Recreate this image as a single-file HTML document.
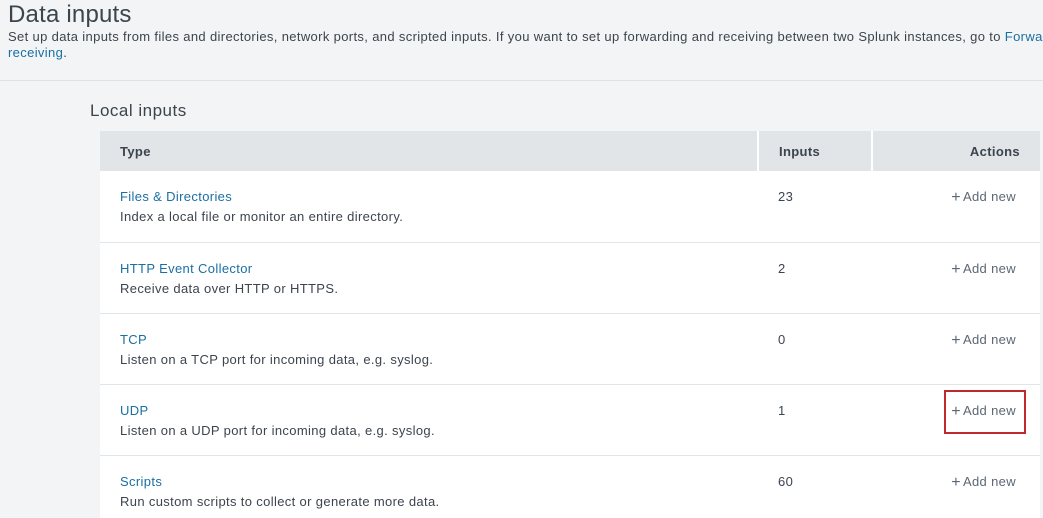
<!DOCTYPE html>
<html><head><style>
html,body{margin:0;width:1043px;height:518px;overflow:hidden}
body{background:#f2f4f5;font-family:"Liberation Sans",sans-serif;color:#3c444d;position:relative;letter-spacing:0.35px}
h1{position:absolute;left:8px;top:0;margin:0;font-size:24px;font-weight:normal;line-height:30px;color:#3c444d;letter-spacing:0.2px}
.desc{position:absolute;left:8px;top:29px;font-size:13px;line-height:16px;white-space:nowrap;width:1035px;overflow:hidden}
a{color:#1a6fa3;text-decoration:none}
.hr{position:absolute;left:0;top:80px;width:1043px;height:1px;background:#dde2e6}
h2{position:absolute;left:90px;top:101px;margin:0;font-size:17px;font-weight:normal;line-height:20px;letter-spacing:0.5px}
table{position:absolute;left:100px;top:131px;width:940px;border-collapse:collapse;font-size:13px;background:#fff;table-layout:fixed}
th{background:#e1e5e8;height:40px;text-align:left;font-weight:bold;padding:0 20px;border-right:2px solid #fff}
th:last-child{border-right:none;text-align:right}
td{vertical-align:top;height:71px;padding:0 20px;border-bottom:1px solid #e1e5e8;box-sizing:border-box}
td .t{margin-top:16px;line-height:20px}
td.a{text-align:right;color:#5c6773;padding-right:24px;white-space:nowrap}
.p{font-size:16px;margin-right:2px;vertical-align:-1px}
.box{position:absolute;left:944px;top:390px;width:78px;height:40px;border:2px solid #c0282f}
</style></head><body>
<h1>Data inputs</h1>
<div class="desc">Set up data inputs from files and directories, network ports, and scripted inputs. If you want to set up forwarding and receiving between two Splunk instances, go to <a>Forwarding and</a><br><a>receiving</a>.</div>
<div class="hr"></div>
<h2>Local inputs</h2>
<table>
<colgroup><col style="width:658px"><col style="width:114px"><col></colgroup>
<tr><th>Type</th><th>Inputs</th><th>Actions</th></tr>
<tr><td><div class="t"><a>Files &amp; Directories</a><br>Index a local file or monitor an entire directory.</div></td><td><div class="t">23</div></td><td class="a"><div class="t"><span class="p">+</span>Add new</div></td></tr>
<tr><td><div class="t"><a>HTTP Event Collector</a><br>Receive data over HTTP or HTTPS.</div></td><td><div class="t">2</div></td><td class="a"><div class="t"><span class="p">+</span>Add new</div></td></tr>
<tr><td><div class="t"><a>TCP</a><br>Listen on a TCP port for incoming data, e.g. syslog.</div></td><td><div class="t">0</div></td><td class="a"><div class="t"><span class="p">+</span>Add new</div></td></tr>
<tr><td><div class="t"><a>UDP</a><br>Listen on a UDP port for incoming data, e.g. syslog.</div></td><td><div class="t">1</div></td><td class="a"><div class="t"><span class="p">+</span>Add new</div></td></tr>
<tr><td><div class="t"><a>Scripts</a><br>Run custom scripts to collect or generate more data.</div></td><td><div class="t">60</div></td><td class="a"><div class="t"><span class="p">+</span>Add new</div></td></tr>
</table>
<div class="box"></div>
</body></html>
